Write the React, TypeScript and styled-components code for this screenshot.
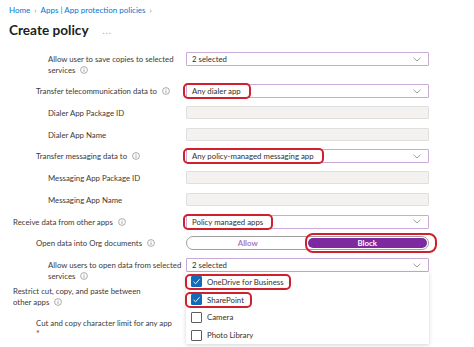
import styled, { createGlobalStyle } from "styled-components";

const GlobalStyle = createGlobalStyle`
    html, body {
        margin: 0;
        padding: 0;
        background: #ffffff;
    }
    body {
        font-family: Lato, "Open Sans", sans-serif;
        color: #323130;
        width: 474px;
        height: 347px;
        overflow: hidden;
    }
`;

const Page = styled.div`
    position: relative;
    padding: 4px 0 0 9px;
`;

const Breadcrumb = styled.div`
    display: flex;
    align-items: center;
    gap: 4px;
    font-size: 8px;
    color: #0078d4;
    height: 12px;
`;

const Sep = styled.span`
    color: #8a8886;
    font-size: 8px;
`;

const TitleRow = styled.div`
    display: flex;
    align-items: center;
    gap: 14px;
    margin-top: 3px;
    height: 22px;
`;

const Title = styled.h1`
    margin: 0;
    font-size: 13.6px;
    font-weight: 700;
    color: #201f1e;
`;

const More = styled.span`
    color: #a19f9d;
    font-size: 9px;
    letter-spacing: 1px;
`;

const Form = styled.div`
    display: flex;
    flex-direction: column;
    margin-top: 11px;
    margin-left: -9px;
`;

const Row = styled.div<{ $h: number }>`
    display: grid;
    grid-template-columns: 186px 243px;
    align-items: start;
    height: ${(p) => p.$h}px;
`;

const Label = styled.div<{ $indent: number }>`
    padding-left: ${(p) => p.$indent}px;
    padding-top: 2px;
    font-size: 7.8px;
    line-height: 11px;
    color: #3b3a39;
    white-space: nowrap;
`;

const Required = styled.div`
    color: #a4262c;
    font-size: 9px;
    line-height: 10px;
`;

const Info = () => (
    <svg width="8" height="8" viewBox="0 0 8 8" style={{ verticalAlign: "-1px", marginLeft: 5 }}>
        <circle cx="4" cy="4" r="3.4" fill="none" stroke="#8a8886" strokeWidth="0.7" />
        <line x1="4" y1="3.4" x2="4" y2="5.9" stroke="#8a8886" strokeWidth="0.8" />
        <circle cx="4" cy="2.3" r="0.45" fill="#8a8886" />
    </svg>
);

const Select = styled.div`
    position: relative;
    box-sizing: border-box;
    height: 14px;
    border: 1px solid #c9a9da;
    border-radius: 1px;
    display: flex;
    align-items: center;
    justify-content: space-between;
    padding: 0 7px 0 5px;
    font-size: 7.8px;
    color: #323130;
    background: #fff;
`;

const Chevron = () => (
    <svg width="8" height="5" viewBox="0 0 8 5">
        <path d="M0.5 0.7 L4 4 L7.5 0.7" fill="none" stroke="#8a8886" strokeWidth="0.8" />
    </svg>
);

const TextBox = styled.div`
    box-sizing: border-box;
    height: 13px;
    border: 1px solid #e1dfdd;
    background: #f3f2f1;
    border-radius: 1px;
`;

const Marked = styled.span<{ $l?: number; $r?: number }>`
    position: relative;
    &::after {
        content: "";
        position: absolute;
        top: -3px;
        bottom: -3px;
        left: ${(p) => -(p.$l ?? 9)}px;
        right: ${(p) => -(p.$r ?? 10)}px;
        border: 2px solid #d0202e;
        border-radius: 5px;
    }
`;

const Toggle = styled.div`
    position: relative;
    box-sizing: border-box;
    height: 14px;
    border: 1px solid #a19f9d;
    border-radius: 7px;
    display: grid;
    grid-template-columns: 1fr 1fr;
    font-size: 7.8px;
    padding: 1px;
`;

const ToggleOption = styled.div<{ $on?: boolean }>`
    display: flex;
    align-items: center;
    justify-content: center;
    border-radius: 6px;
    color: ${(p) => (p.$on ? "#ffffff" : "#a67bc3")};
    background: ${(p) => (p.$on ? "#7d2aa0" : "transparent")};
    font-weight: 700;
    position: relative;
`;

const PillMark = styled.div`
    position: absolute;
    top: -4px;
    bottom: -4px;
    left: calc(50% - 3px);
    right: -9px;
    border: 2px solid #d0202e;
    border-radius: 8px;
`;

const Menu = styled.div`
    position: absolute;
    left: 186px;
    top: 272px;
    width: 243px;
    height: 72px;
    box-sizing: border-box;
    background: #fff;
    box-shadow: 0 1px 4px rgba(0, 0, 0, 0.18);
    display: flex;
    flex-direction: column;
    padding-top: 1px;
`;

const Option = styled.div`
    height: 18px;
    display: flex;
    align-items: center;
    gap: 5px;
    padding-left: 5px;
    font-size: 7.8px;
    color: #323130;
`;

const Box = styled.span<{ $checked?: boolean }>`
    box-sizing: border-box;
    width: 11px;
    height: 11px;
    border-radius: 1px;
    border: 1px solid ${(p) => (p.$checked ? "#0f6cbd" : "#605e5c")};
    background: ${(p) => (p.$checked ? "#0f6cbd" : "#fff")};
    display: flex;
    align-items: center;
    justify-content: center;
`;

const Check = () => (
    <svg width="9" height="9" viewBox="0 0 9 9">
        <path d="M1.5 4.8 L3.6 6.8 L7.6 2.2" fill="none" stroke="#fff" strokeWidth="0.9" />
    </svg>
);

export default function App() {
    return (
        <>
            <GlobalStyle />
            <Page>
                <Breadcrumb>
                    <span>Home</span>
                    <Sep>›</Sep>
                    <span>Apps | App protection policies</span>
                    <Sep>›</Sep>
                </Breadcrumb>
                <TitleRow>
                    <Title>Create policy</Title>
                    <More>...</More>
                </TitleRow>
                <Form>
                    <Row $h={32}>
                        <Label $indent={48}>
                            Allow user to save copies to selected
                            <br />
                            services
                            <Info />
                        </Label>
                        <Select>
                            <span>2 selected</span>
                            <Chevron />
                        </Select>
                    </Row>
                    <Row $h={21.75}>
                        <Label $indent={36}>
                            Transfer telecommunication data to
                            <Info />
                        </Label>
                        <Select>
                            <Marked>Any dialer app</Marked>
                            <Chevron />
                        </Select>
                    </Row>
                    <Row $h={21.75}>
                        <Label $indent={48}>Dialer App Package ID</Label>
                        <TextBox />
                    </Row>
                    <Row $h={21.75}>
                        <Label $indent={48}>Dialer App Name</Label>
                        <TextBox />
                    </Row>
                    <Row $h={21.75}>
                        <Label $indent={36}>
                            Transfer messaging data to
                            <Info />
                        </Label>
                        <Select>
                            <Marked>Any policy-managed messaging app</Marked>
                            <Chevron />
                        </Select>
                    </Row>
                    <Row $h={21.75}>
                        <Label $indent={48}>Messaging App Package ID</Label>
                        <TextBox />
                    </Row>
                    <Row $h={21.75}>
                        <Label $indent={48}>Messaging App Name</Label>
                        <TextBox />
                    </Row>
                    <Row $h={21.75}>
                        <Label $indent={13}>
                            Receive data from other apps
                            <Info />
                        </Label>
                        <Select>
                            <Marked>Policy managed apps</Marked>
                            <Chevron />
                        </Select>
                    </Row>
                    <Row $h={21.75}>
                        <Label $indent={36}>
                            Open data into Org documents
                            <Info />
                        </Label>
                        <Toggle>
                            <ToggleOption>Allow</ToggleOption>
                            <ToggleOption $on>Block</ToggleOption>
                            <PillMark />
                        </Toggle>
                    </Row>
                    <Row $h={25.5}>
                        <Label $indent={48}>
                            Allow users to open data from selected
                            <br />
                            services
                            <Info />
                        </Label>
                        <Select>
                            <span>2 selected</span>
                            <Chevron />
                        </Select>
                    </Row>
                    <Row $h={32}>
                        <Label $indent={13}>
                            Restrict cut, copy, and paste between
                            <br />
                            other apps
                            <Info />
                        </Label>
                    </Row>
                    <Row $h={30}>
                        <Label $indent={36}>
                            Cut and copy character limit for any app
                            <Required>*</Required>
                        </Label>
                    </Row>
                </Form>
                <Menu>
                    <Option>
                        <Box $checked>
                            <Check />
                        </Box>
                        <Marked $l={22} $r={7}>OneDrive for Business</Marked>
                    </Option>
                    <Option>
                        <Box $checked>
                            <Check />
                        </Box>
                        <Marked $l={22} $r={8}>SharePoint</Marked>
                    </Option>
                    <Option>
                        <Box />
                        <span>Camera</span>
                    </Option>
                    <Option>
                        <Box />
                        <span>Photo Library</span>
                    </Option>
                </Menu>
            </Page>
        </>
    );
}
